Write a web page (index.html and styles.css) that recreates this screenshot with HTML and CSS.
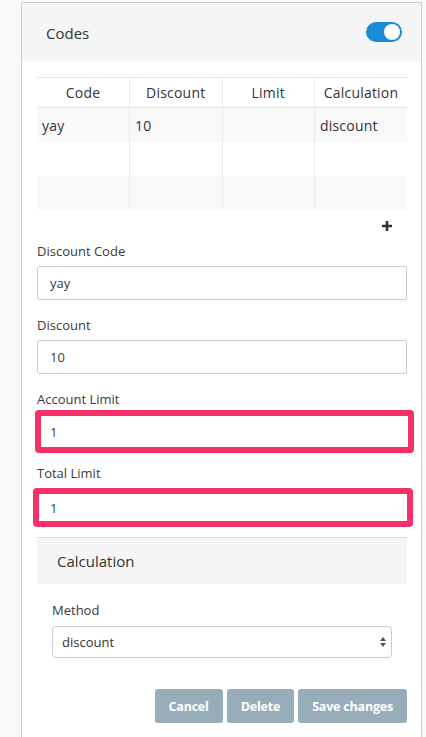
FILE: index.html
```html
<!DOCTYPE html>
<html lang="en">
<head>
<meta charset="utf-8">
<title>Codes</title>
<link rel="stylesheet" href="styles.css">
</head>
<body>
<div class="panel">
  <div class="panel-head">
    <span class="panel-title">Codes</span>
    <span class="toggle"><span class="knob"></span></span>
  </div>
  <div class="panel-body">
    <table class="codes">
      <thead>
        <tr><th>Code</th><th>Discount</th><th>Limit</th><th>Calculation</th></tr>
      </thead>
      <tbody>
        <tr><td>yay</td><td>10</td><td></td><td>discount</td></tr>
        <tr><td></td><td></td><td></td><td></td></tr>
        <tr><td></td><td></td><td></td><td></td></tr>
      </tbody>
    </table>
    <div class="add-row">
      <svg class="plus" width="10" height="10" viewBox="0 0 10 10"><path d="M5 0V10M0 5H10" stroke="#333" stroke-width="2.6"/></svg>
    </div>
    <div class="field">
      <label class="label">Discount Code</label>
      <input class="input" type="text" value="yay">
    </div>
    <div class="field">
      <label class="label">Discount</label>
      <input class="input" type="text" value="10">
    </div>
    <div class="field">
      <label class="label">Account Limit</label>
      <input class="input hl-account" type="text" value="1">
    </div>
    <div class="field last">
      <label class="label">Total Limit</label>
      <input class="input hl-total" type="text" value="1">
    </div>
    <div class="calc">
      <div class="calc-head">Calculation</div>
      <div class="calc-body">
        <label class="label method">Method</label>
        <div class="select-wrap">
          <select class="select"><option>discount</option></select>
          <svg class="arrows" width="8" height="12" viewBox="0 0 8 12"><path d="M4 1L7 5H1Z M4 11L7 7H1Z" fill="#555"/></svg>
        </div>
      </div>
    </div>
    <div class="actions">
      <button class="btn">Cancel</button>
      <button class="btn">Delete</button>
      <button class="btn">Save changes</button>
    </div>
  </div>
</div>
</body>
</html>
```
FILE: styles.css
```css
html, body {
  margin: 0;
  padding: 0;
}
body {
  background: #f9f9f9;
  font-family: "Open Sans", "DejaVu Sans", sans-serif;
  color: #333;
  overflow: hidden;
}
.panel {
  margin: 2px 4px 0 21px;
  border: 1px solid #cfcfcf;
  border-bottom: none;
  background: #fff;
  min-height: 760px;
}
.panel-head {
  height: 58px;
  background: #f5f5f5;
  display: flex;
  align-items: center;
  justify-content: space-between;
  padding: 0 19px 0 24px;
}
.panel-title {
  font-size: 15px;
  color: #333;
  line-height: 20px;
  padding-top: 1px;
}
.toggle {
  width: 36px;
  height: 20px;
  border-radius: 10px;
  background: #1b8ad6;
  display: flex;
  align-items: center;
  justify-content: flex-end;
  padding: 0 2px;
  box-sizing: border-box;
}
.knob {
  width: 16px;
  height: 16px;
  border-radius: 50%;
  background: #fff;
}
.panel-body {
  padding: 16px 14px 0 15px;
}
.codes {
  width: 100%;
  border-collapse: collapse;
  table-layout: fixed;
  border-top: 1px solid #e6e6e6;
  font-size: 14px;
}
.codes th {
  height: 29px;
  padding: 0;
  font-weight: 400;
  text-align: center;
  letter-spacing: 0.2px;
  color: #333;
  border-bottom: 1px solid #e6e6e6;
  border-right: 1px solid #ececec;
}
.codes td {
  height: 34px;
  padding: 0 5px;
  color: #333;
  letter-spacing: 0.2px;
  border-right: 1px solid #ececec;
}
.codes th:last-child,
.codes td:last-child {
  border-right: none;
}
.codes tbody tr:nth-child(odd) {
  background: #f9f9f9;
}
.add-row {
  height: 32px;
  box-sizing: border-box;
  display: flex;
  justify-content: flex-end;
  align-items: flex-start;
  padding: 11px 15px 0 0;
}
.plus {
  display: block;
}
.field {
  margin-bottom: 16px;
}
.field.last {
  margin-bottom: 15px;
}
.label {
  display: block;
  font-size: 13px;
  line-height: 18px;
  color: #3a3a3a;
  margin-bottom: 6px;
}
.input {
  display: block;
  width: 100%;
  height: 34px;
  box-sizing: border-box;
  border: 1px solid #ccc;
  border-radius: 2px;
  padding: 0 12px;
  font-family: "Open Sans", "DejaVu Sans", sans-serif;
  font-size: 13px;
  color: #3a3a3a;
  background: #fff;
  outline: none;
}
.input.hl-account {
  border: 6px solid #f7306a;
  border-radius: 4px;
  height: 43px;
  width: calc(100% + 9px);
  margin: -4px -7px -5px -2px;
  padding-left: 9px;
}
.input.hl-total {
  border: 6px solid #f7306a;
  border-radius: 4px;
  height: 39px;
  width: calc(100% + 10px);
  margin: 0 -6px -5px -4px;
  padding-left: 11px;
}
.calc {
  border-top: 1px solid #ddd;
}
.calc-head {
  height: 46px;
  background: #f5f5f5;
  display: flex;
  align-items: center;
  padding-left: 20px;
  font-size: 15px;
  color: #333;
}
.calc-body {
  padding: 17px 15px 0;
}
.label.method {
  margin-bottom: 7px;
}
.select-wrap {
  position: relative;
}
.select {
  display: block;
  width: 100%;
  height: 32px;
  box-sizing: border-box;
  border: 1px solid #ccc;
  border-radius: 4px;
  padding: 0 9px;
  font-family: "Open Sans", "DejaVu Sans", sans-serif;
  font-size: 13px;
  color: #333;
  background: #fff;
  -webkit-appearance: none;
  appearance: none;
  outline: none;
}
.arrows {
  position: absolute;
  right: 5px;
  top: 10px;
}
.actions {
  display: flex;
  justify-content: flex-end;
  gap: 4px;
  margin-top: 31px;
}
.btn {
  height: 34px;
  padding: 0 14px;
  border: none;
  border-radius: 3px;
  background: #98adba;
  color: #fff;
  font-family: "Open Sans", "DejaVu Sans", sans-serif;
  font-weight: 700;
  font-size: 12.5px;
  letter-spacing: -0.2px;
}
```
